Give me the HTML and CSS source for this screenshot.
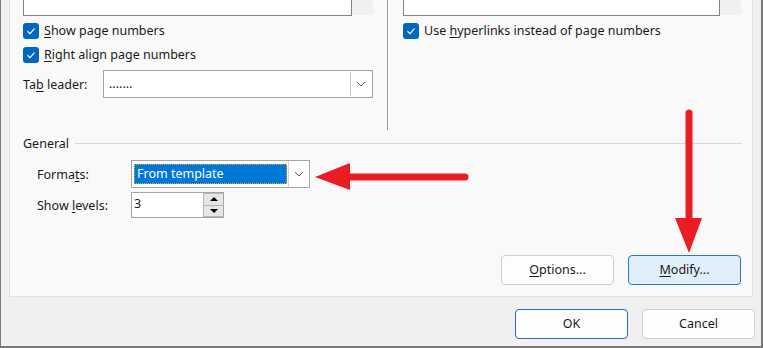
FILE: index.html
```html
<!DOCTYPE html>
<html lang="en">
<head>
    <meta charset="UTF-8">
    <title>Table of Contents</title>
    <link rel="stylesheet" href="styles.css">
</head>
<body>
    <div class="dialog">
        <div class="panel">
            <div class="top">
                <div class="col col-left">
                    <div class="preview">
                        <div class="preview-box"></div>
                        <div class="preview-bar"></div>
                    </div>
                    <label class="check">
                        <span class="box"><svg viewBox="0 0 16 16"><path d="M4.5 8.3 L7 10.6 L11.5 5.6"/></svg></span>
                        <span><u>S</u>how page numbers</span>
                    </label>
                    <label class="check">
                        <span class="box"><svg viewBox="0 0 16 16"><path d="M4.5 8.3 L7 10.6 L11.5 5.6"/></svg></span>
                        <span><u>R</u>ight align page numbers</span>
                    </label>
                    <div class="field tab-leader">
                        <span class="field-label">Ta<u>b</u> leader:</span>
                        <div class="select select-wide">
                            <span class="select-value">.......</span>
                            <span class="drop"><svg viewBox="0 0 10 6"><polyline points="1,1 5,5 9,1"/></svg></span>
                        </div>
                    </div>
                </div>
                <div class="divider"></div>
                <div class="col col-right">
                    <div class="preview">
                        <div class="preview-box"></div>
                        <div class="preview-bar"></div>
                    </div>
                    <label class="check">
                        <span class="box"><svg viewBox="0 0 16 16"><path d="M4.5 8.3 L7 10.6 L11.5 5.6"/></svg></span>
                        <span>Use <u>h</u>yperlinks instead of page numbers</span>
                    </label>
                </div>
            </div>

            <div class="group-title">
                <span>General</span>
                <span class="group-line"></span>
            </div>
            <div class="general">
                <div class="field">
                    <span class="field-label">Forma<u>t</u>s:</span>
                    <div class="select select-formats">
                        <span class="select-value selected">From template</span>
                        <span class="drop"><svg viewBox="0 0 10 6"><polyline points="1,1 5,5 9,1"/></svg></span>
                    </div>
                </div>
                <div class="field">
                    <span class="field-label">Show <u>l</u>evels:</span>
                    <div class="spin">
                        <span class="spin-value">3</span>
                        <span class="spin-btns">
                            <span class="spin-btn"><span class="tri tri-up"></span></span>
                            <span class="spin-btn"><span class="tri tri-down"></span></span>
                        </span>
                    </div>
                </div>
            </div>

            <div class="panel-buttons">
                <a href="##" class="btn"><u>O</u>ptions...</a>
                <a href="##" class="btn btn-hot"><u>M</u>odify...</a>
            </div>
        </div>

        <div class="dialog-buttons">
            <a href="##" class="btn btn-default">OK</a>
            <a href="##" class="btn">Cancel</a>
        </div>

        <!-- red annotation arrows -->
        <svg class="arrows" viewBox="0 0 763 348">
            <line x1="345" y1="177" x2="465" y2="177"/>
            <polygon points="315,177 350,163 350,190"/>
            <line x1="689" y1="113" x2="689" y2="222"/>
            <polygon points="689,253 675,218 702,218"/>
        </svg>
    </div>
</body>
</html>
```

FILE: styles.css
```css
*{
    padding: 0;
    margin: 0;
    box-sizing: border-box;
}

body{
    font-family: "Noto Sans", "Open Sans", sans-serif;
    font-size: 12.5px;
    color: #1a1a1a;
    background-color: #f0f0f0;
}

a{
    text-decoration: none;
    color: #1a1a1a;
}

u{
    text-underline-offset: 2px;
}

.dialog{
    width: 763px;
    height: 348px;
    position: relative;
    padding: 0 8px 0 8px;
    background-color: #f0f0f0;
    border-left: 1px solid #7a7a7a;
    border-right: 2px solid #7a7a7a;
    border-bottom: 2px solid #7a7a7a;
}

.panel{
    height: 297px;
    padding: 0 10px 0 13px;
    background-color: #f9f9f9;
    border: 1px solid #e2e2e2;
    border-top: none;
}

/* ==================上半部分===================== */
.top{
    display: flex;
    height: 130px;
}

.col-left{
    width: 350px;
}

.col-right{
    width: 338px;
}

.divider{
    width: 1px;
    height: 130px;
    margin: 0 15px 0 14px;
    background-color: #9a9a9a;
}

.preview{
    display: flex;
    height: 16px;
}

.preview-box{
    flex: 1;
    height: 16px;
    background-color: #fff;
    border: 1px solid #838383;
    border-top: none;
}

.preview-bar{
    width: 21px;
    height: 15px;
    background-color: #f0f0f0;
}

.check{
    display: flex;
    align-items: center;
    height: 16px;
    margin-top: 7px;
    line-height: 16px;
}

.check + .check{
    margin-top: 8px;
}

.check .box{
    width: 16px;
    height: 16px;
    margin-right: 5px;
    border-radius: 3px;
    background-color: #0067c0;
}

.check .box svg{
    display: block;
    width: 16px;
    height: 16px;
    fill: none;
    stroke: #fff;
    stroke-width: 1.2;
}

.field{
    display: flex;
    align-items: center;
}

.field-label{
    display: inline-block;
}

.tab-leader{
    margin-top: 7px;
}

.tab-leader .field-label{
    width: 80px;
}

.select{
    display: flex;
    height: 28px;
    padding: 1px;
    background-color: #fff;
    border: 1px solid #a5a5a5;
}

.select-wide{
    width: 270px;
}

.select-value{
    flex: 1;
    padding-left: 4px;
    line-height: 24px;
}

.drop{
    display: flex;
    align-items: center;
    justify-content: center;
    width: 21px;
    background-color: #fff;
    border-left: 1px solid #d4d4d4;
}

.drop svg{
    width: 10px;
    height: 6px;
    fill: none;
    stroke: #555;
    stroke-width: 1;
}

/* ==================General===================== */
.group-title{
    display: flex;
    align-items: center;
    height: 16px;
    margin-top: 5px;
}

.group-line{
    flex: 1;
    height: 1px;
    margin-left: 6px;
    background-color: #d8d8d8;
}

.general{
    padding-left: 14px;
}

.general .field-label{
    width: 94px;
}

.general .field{
    margin-top: 4px;
}

.general .field:first-child{
    margin-top: 9px;
}

.select-formats{
    width: 179px;
    padding: 3px 0 3px 2px;
}

.select-formats .drop{
    margin: -3px 0;
}

.selected{
    margin-right: 1px;
    padding-left: 3px;
    line-height: 20px;
    color: #fff;
    background-color: #0078d7;
    outline: 1px dotted #e8a040;
    outline-offset: -1px;
}

.spin{
    display: flex;
    width: 93px;
    height: 26px;
    background-color: #fff;
    border: 1px solid #a5a5a5;
}

.spin-value{
    flex: 1;
    padding-left: 2px;
    line-height: 22px;
}

.spin-btns{
    display: flex;
    flex-direction: column;
    width: 20px;
}

.spin-btn{
    display: flex;
    flex: 1;
    align-items: center;
    justify-content: center;
    background-color: #e6e6e6;
    border: 1px solid #b5b5b5;
    border-right: none;
}

.spin-btn + .spin-btn{
    border-top: none;
}

.tri{
    width: 0;
    height: 0;
    border-left: 4px solid transparent;
    border-right: 4px solid transparent;
}

.tri-up{
    border-bottom: 4px solid #000;
}

.tri-down{
    border-top: 4px solid #000;
}

/* ==================按钮===================== */
.panel-buttons{
    display: flex;
    justify-content: flex-end;
    gap: 14px;
    margin-top: 37px;
    padding-right: 1px;
}

.btn{
    display: block;
    width: 113px;
    height: 30px;
    line-height: 28px;
    text-align: center;
    background-color: #fdfdfd;
    border: 1px solid #d0d0d0;
    border-radius: 4px;
}

.btn-hot{
    background-color: #e0eef9;
    border-color: #2878c8;
}

.btn-default{
    background-color: #fdfdfd;
    border-color: #1f6fc0;
}

.dialog-buttons{
    display: flex;
    justify-content: flex-end;
    gap: 14px;
    margin-top: 12px;
    margin-right: -2px;
}

/* ==================红色箭头===================== */
.arrows{
    position: absolute;
    left: -1px;
    top: 0;
    width: 763px;
    height: 348px;
    pointer-events: none;
}

.arrows line{
    stroke: #ec1c24;
    stroke-width: 7;
    stroke-linecap: round;
}

.arrows polygon{
    fill: #ec1c24;
}
```
